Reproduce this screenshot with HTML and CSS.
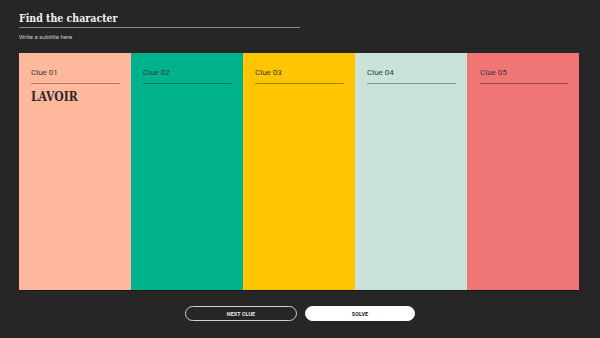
FILE: index.html
```html
<!DOCTYPE html>
<html lang="en">
  <head>
    <meta charset="UTF-8" />
    <meta name="viewport" content="width=device-width, initial-scale=1.0" />
    <title>Find the character</title>
    <link rel="stylesheet" href="styles.css">
  </head>
  <body>
    <div class="page">
      <div class="header">
        <h1 class="title">Find the character</h1>
        <p class="subtitle">Write a subtitle here</p>
      </div>
      <div class="clues">
        <div class="clue clue-1">
          <div class="clue-label">Clue 01</div>
          <div class="clue-answer">LAVOIR</div>
        </div>
        <div class="clue clue-2">
          <div class="clue-label">Clue 02</div>
        </div>
        <div class="clue clue-3">
          <div class="clue-label">Clue 03</div>
        </div>
        <div class="clue clue-4">
          <div class="clue-label">Clue 04</div>
        </div>
        <div class="clue clue-5">
          <div class="clue-label">Clue 05</div>
        </div>
      </div>
      <div class="actions">
        <button class="btn btn-outline">NEXT CLUE</button>
        <button class="btn btn-solid">SOLVE</button>
      </div>
    </div>
  </body>
</html>
```

FILE: styles.css
```css
body {
  margin: 0;
  background-color: #262626;
  font-family: Roboto, "Liberation Sans", sans-serif;
  overflow: hidden;
}
.page {
  width: 560px;
  padding: 10px 0 0 19px;
}
.header {
  width: 281px;
}
.title {
  margin: 0;
  padding-bottom: 1px;
  border-bottom: 1px solid #8a8a8a;
  font-family: "DejaVu Serif", serif;
  font-stretch: condensed;
  font-size: 10.5px;
  font-weight: bold;
  color: #f2f2f2;
  line-height: 16px;
}
.subtitle {
  margin: 5px 0 0;
  font-size: 6px;
  color: #c8c8c8;
  line-height: 8px;
}
.clues {
  display: grid;
  grid-template-columns: repeat(5, 1fr);
  height: 237px;
  margin-top: 12px;
  box-shadow: 0 1px 0 rgba(0, 0, 0, 0.35);
}
.clue {
  padding: 15px 11px 0 12px;
}
.clue-label {
  padding-bottom: 5px;
  border-bottom: 1px solid rgba(0, 0, 0, 0.35);
  font-size: 8px;
  line-height: 10px;
  color: #3a3a3a;
}
.clue-answer {
  margin-top: 6px;
  font-family: "DejaVu Serif", serif;
  font-stretch: condensed;
  font-size: 12px;
  font-weight: bold;
  color: #2b2b2b;
  line-height: 14px;
}
.clue-1 { background: #ffb89c; }
.clue-2 { background: #00b28b; }
.clue-3 { background: #ffc600; }
.clue-4 { background: #c9e3d9; }
.clue-5 { background: #f07575; padding-left: 13px; }
.actions {
  display: flex;
  justify-content: center;
  gap: 8px;
  margin-top: 16px;
  padding-left: 2px;
}
.btn {
  width: 112px;
  height: 15px;
  padding: 0;
  border-radius: 8px;
  font-family: Roboto, "Liberation Sans", sans-serif;
  font-size: 5.5px;
  font-weight: bold;
  cursor: pointer;
}
.btn-outline {
  background: transparent;
  border: 1px solid #cfcfcf;
  color: #e8e8e8;
}
.btn-solid {
  width: 110px;
  background: #fff;
  border: 1px solid #fff;
  color: #222;
}
```
